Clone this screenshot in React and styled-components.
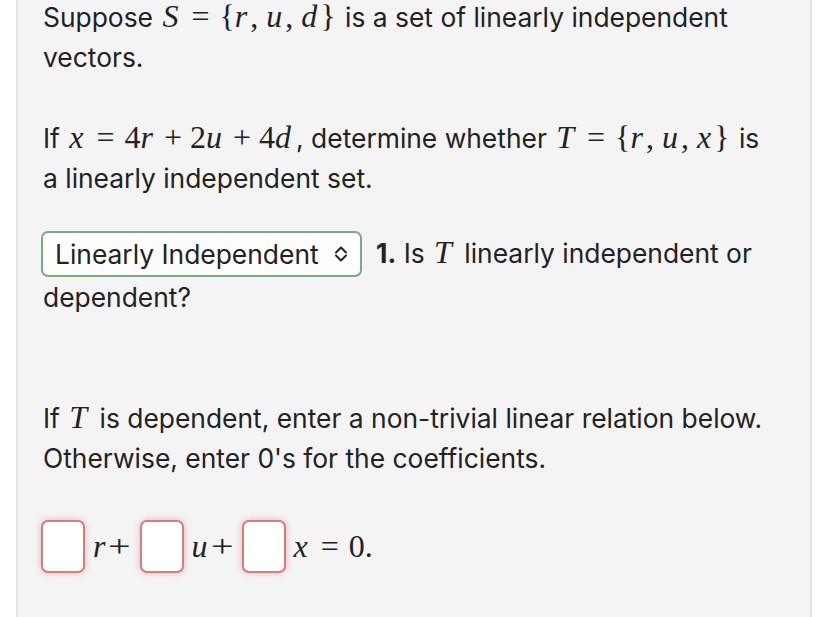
import React from 'react';
import styled, { createGlobalStyle } from 'styled-components';

const GlobalStyle = createGlobalStyle`
  html, body {
    margin: 0;
    padding: 0;
    background: #ffffff;
  }
  body {
    font-family: Inter, "Noto Sans", "Liberation Sans", sans-serif;
    color: #222222;
    overflow: hidden;
  }
`;

const Panel = styled.div`
  margin-left: 16px;
  width: 796px;
  height: 630px;
  box-sizing: border-box;
  background: #f4f4f4;
  border-left: 2px solid #e3e3e3;
  border-right: 2px solid #e3e3e3;
  padding: 0 34px 0 25px;
  position: relative;
  top: -4px;
`;

const Para = styled.p`
  margin: ${({ $top }) => $top || 0}px 0 0 0;
  font-size: 26.4px;
  line-height: 40px;
`;

const Math = styled.span`
  font-family: "Liberation Serif", "DejaVu Serif", serif;
  font-size: 32px;
  white-space: nowrap;
  margin: 0 2px;
`;

const V = styled.i`
  font-style: italic;
  margin-right: 3px;
`;

const N = styled.span`
  font-style: normal;
`;

const Rel = styled.span`
  margin: 0 10px;
`;

const Bin = styled.span`
  margin: 0 8px;
`;

const Comma = styled.span`
  margin-right: 8px;
`;

const SelectBox = styled.span`
  display: inline-flex;
  align-items: center;
  box-sizing: border-box;
  width: 321px;
  height: 46px;
  padding: 0 10px 0 12px;
  justify-content: space-between;
  vertical-align: middle;
  margin: -3px 14px 0 -2px;
  background: #fdfdfd;
  border: 2px solid #7aab7e;
  border-radius: 7px;
  font-size: 26.4px;
`;

const Bold = styled.b`
  font-weight: 700;
`;

const EqRow = styled.div`
  display: flex;
  align-items: center;
  margin-top: 42px;
  margin-left: -2px;
  gap: 8px;
`;

const Blank = styled.span`
  display: block;
  box-sizing: border-box;
  width: 44px;
  height: 53px;
  background: #ffffff;
  border: 2px solid #cf7f80;
  border-radius: 7px;
  box-shadow: 0 0 6px rgba(220, 90, 90, 0.45);
`;

const Term = styled.span`
  font-family: "Liberation Serif", "DejaVu Serif", serif;
  font-size: 32px;
  display: inline-flex;
  align-items: center;
  padding-right: 1px;
`;

const Plus = styled.span`
  transform: scaleX(1.25);
  transform-origin: left center;
  margin-right: 4px;
`;

const Chevrons = () => (
  <svg width="18" height="18" viewBox="0 0 18 18" fill="none" stroke="#222" strokeWidth="2" strokeLinecap="round" strokeLinejoin="round">
    <polyline points="4,7.5 9,2.5 14,7.5" />
    <polyline points="4,10.5 9,15.5 14,10.5" />
  </svg>
);

const Set = ({ items }) => (
  <>
    <N>{'{'}</N>
    {items.map((it, i) => (
      <React.Fragment key={it}>
        <V>{it}</V>
        {i < items.length - 1 && <Comma>,</Comma>}
      </React.Fragment>
    ))}
    <N>{'}'}</N>
  </>
);

export default function App() {
  return (
    <>
      <GlobalStyle />
      <Panel>
        <Para>
          Suppose <Math><V>S</V><Rel>=</Rel><Set items={['r', 'u', 'd']} /></Math> is a set of linearly independent vectors.
        </Para>
        <Para $top={40}>
          If <Math><V>x</V><Rel>=</Rel><N>4</N><V>r</V><Bin>+</Bin><N>2</N><V>u</V><Bin>+</Bin><N>4</N><V>d</V></Math>, determine whether <Math><V>T</V><Rel>=</Rel><Set items={['r', 'u', 'x']} /></Math> is a linearly independent set.
        </Para>
        <Para $top={34}>
          <SelectBox>
            Linearly Independent
            <Chevrons />
          </SelectBox>
          <Bold>1.</Bold> Is <Math><V>T</V></Math> linearly independent or dependent?
        </Para>
        <Para $top={80}>
          If <Math><V>T</V></Math> is dependent, enter a non-trivial linear relation below. Otherwise, enter 0's for the coefficients.
        </Para>
        <EqRow>
          <Blank />
          <Term><V>r</V><Plus>+</Plus></Term>
          <Blank />
          <Term><V>u</V><Plus>+</Plus></Term>
          <Blank />
          <Term><V>x</V><Rel>=</Rel>0.</Term>
        </EqRow>
      </Panel>
    </>
  );
}
